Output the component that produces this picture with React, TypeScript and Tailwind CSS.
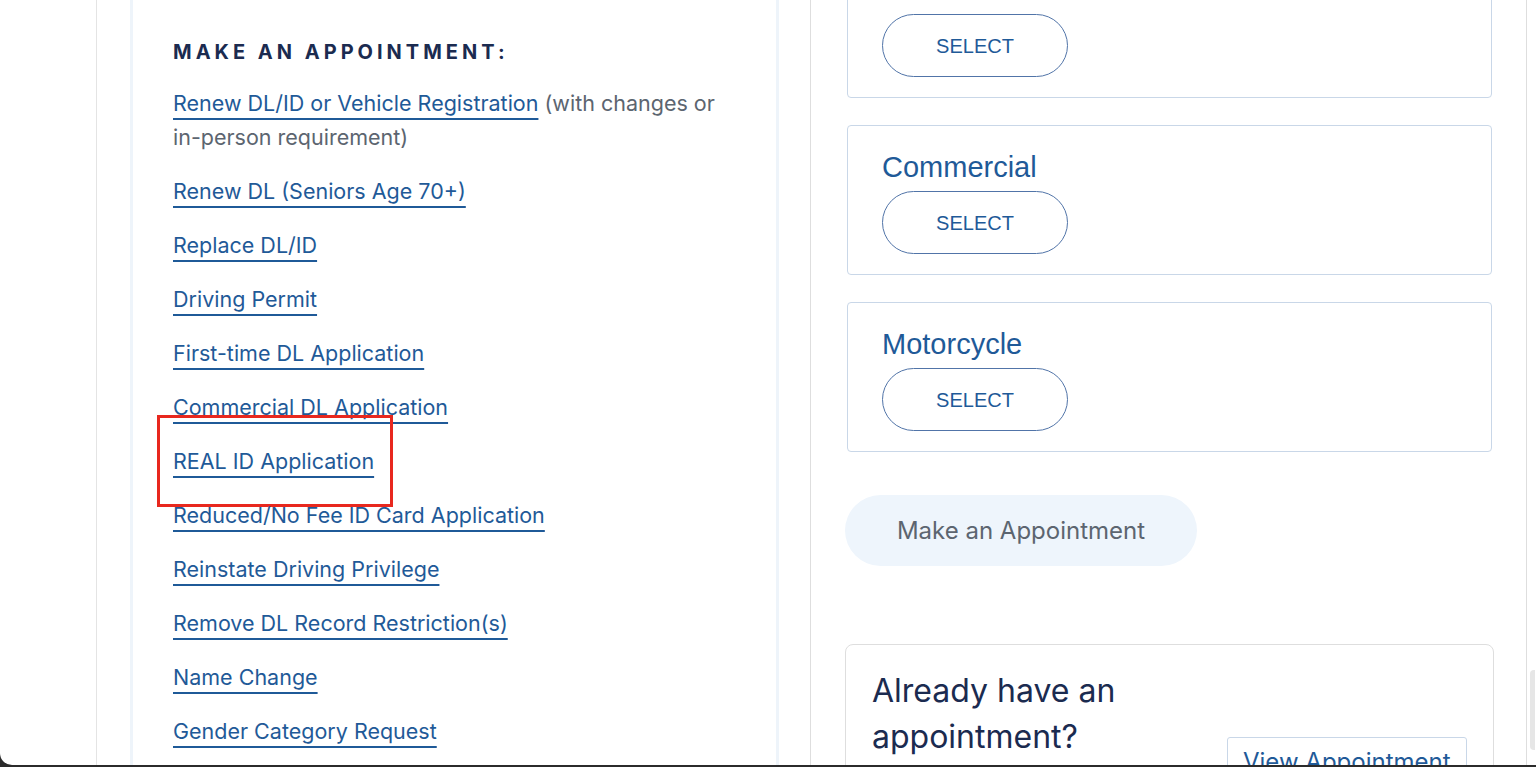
import React from "react";

const links = [
  "Renew DL (Seniors Age 70+)",
  "Replace DL/ID",
  "Driving Permit",
  "First-time DL Application",
  "Commercial DL Application",
  "REAL ID Application",
  "Reduced/No Fee ID Card Application",
  "Reinstate Driving Privilege",
  "Remove DL Record Restriction(s)",
  "Name Change",
  "Gender Category Request",
];

const linkCls =
  "text-[#1f5a98] underline decoration-2 underline-offset-[7px] decoration-[#1f5a98]";

function TypeCard({ title, first }: { title: string; first?: boolean }) {
  return (
    <div
      className={`border border-[#c9d7e8] rounded-[4px] h-[150px] pl-[34px] pt-[24px] ${
        first ? "-mt-[52px]" : "mt-[27px]"
      }`}
    >
      <h3 className="text-[29px] leading-[34px] text-[#1f5a98] font-['Liberation_Sans',Arial,sans-serif]">
        {title}
      </h3>
      <button className="mt-[7px] w-[186px] h-[63px] rounded-full border border-[#5174a8] text-[20px] text-[#1f5a98] font-['Liberation_Sans',Arial,sans-serif]">
        SELECT
      </button>
    </div>
  );
}

export default function App() {
  return (
    <div className="bg-[#2b2b2b] h-[767px] w-[1536px] overflow-hidden font-['Inter',sans-serif]">
      <div className="bg-white h-[765px] rounded-bl-[12px] flex overflow-hidden">
        <div className="w-[96px] shrink-0" />
        <div className="border-l border-[#e4e4e4] pl-[33px] flex shrink-0">
          {/* Left list of appointment types */}
          <section className="w-[649px] border-x-[3px] border-[#eef4fa] pl-[40px] pt-[40px]">
            <h2 className="text-[20px] leading-[24px] font-bold tracking-[0.2em] text-[#1b2b50] mb-[22px]">
              MAKE AN APPOINTMENT:
            </h2>
            <ul className="text-[21.5px] leading-[34px] pr-[40px]">
              <li className="mb-[20px] text-[#5c6570]">
                <a className={linkCls}>Renew DL/ID or Vehicle Registration</a> (with changes or{" "}
                <span className="whitespace-nowrap">in-person</span> requirement)
              </li>
              {links.map((l) => (
                <li key={l} className="mb-[20px]">
                  {l === "REAL ID Application" ? (
                    <span className="inline-block outline-[3px] outline-[#e8281e] -ml-[13px] pl-[13px] pr-[16px] -my-[26px] py-[26px] leading-[34px]">
                      <a className={linkCls}>{l}</a>
                    </span>
                  ) : (
                    <a className={linkCls}>{l}</a>
                  )}
                </li>
              ))}
            </ul>
          </section>
          <div className="w-[31px]" />
          {/* Right column */}
          <aside className="border-x border-[#dedede] w-[717px] pl-[36px] pr-[34px]">
            <TypeCard title="Automobile" first />
            <TypeCard title="Commercial" />
            <TypeCard title="Motorcycle" />
            <button className="mt-[43px] -ml-[2px] w-[352px] h-[71px] rounded-full bg-[#eef5fc] text-[24px] text-[#5c6570]">
              Make an Appointment
            </button>
            <div className="mt-[78px] -mx-[2px] border border-[#dedede] rounded-[8px] pl-[26px] pr-[26px] pt-[23px] flex justify-between items-start">
              <h3 className="text-[32px] leading-[46px] text-[#1b2b50] w-[280px]">
                Already have an appointment?
              </h3>
              <button className="mt-[69px] w-[240px] h-[50px] border border-[#c9d7e8] rounded-[3px] text-[24px] text-[#1f5a98] text-left pl-[15px]">
                View Appointment
              </button>
            </div>
          </aside>
          <div className="w-[3px]" />
          <div className="mt-[670px] w-[5px] h-[80px] rounded-l-[4px] bg-[#e6e6e6]" />
        </div>
      </div>
    </div>
  );
}
